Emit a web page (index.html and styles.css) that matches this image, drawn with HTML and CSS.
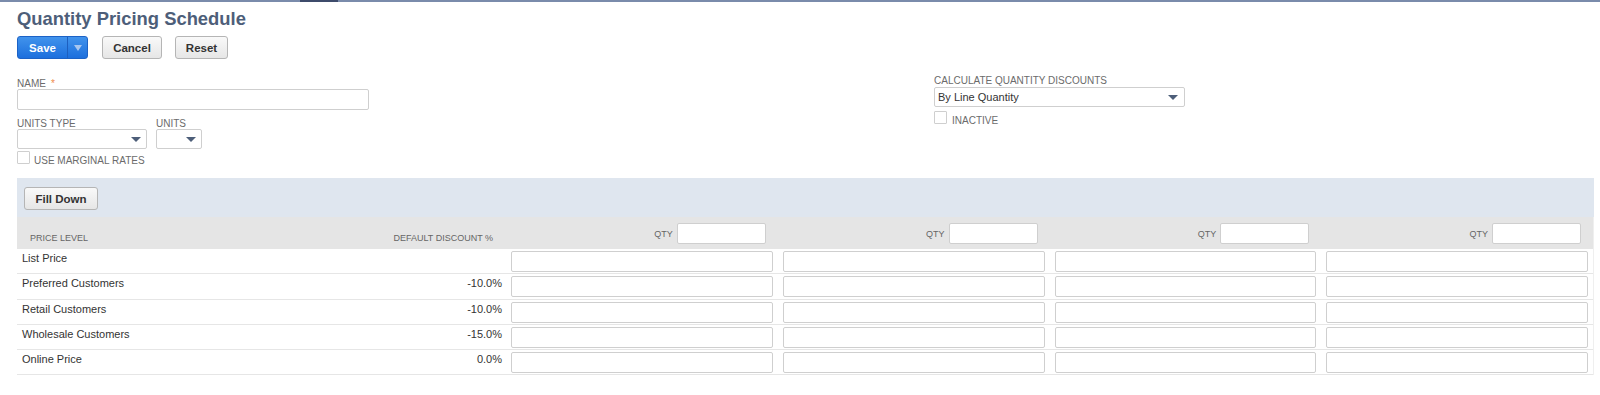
FILE: index.html
```html
<!DOCTYPE html>
<html>
<head>
<meta charset="utf-8">
<title>Quantity Pricing Schedule</title>
<link rel="stylesheet" href="styles.css">
</head>
<body>
<div class="topbar"><span class="topbar-mark"></span></div>
<div class="page">
  <h1 class="title">Quantity Pricing Schedule</h1>
  <div class="actions">
    <div class="split">
      <button class="split-main">Save</button>
      <button class="split-arrow"><span class="tri-light"></span></button>
    </div>
    <button class="btn btn-cancel">Cancel</button>
    <button class="btn btn-reset">Reset</button>
  </div>

  <div class="fields">
    <div class="col-left">
      <div class="lbl">NAME<span class="req">*</span></div>
      <div class="txt name-input"></div>
      <div class="units-row">
        <div class="field">
          <div class="lbl">UNITS TYPE</div>
          <div class="select sel-units-type"><span class="tri"></span></div>
        </div>
        <div class="field">
          <div class="lbl">UNITS</div>
          <div class="select sel-units"><span class="tri"></span></div>
        </div>
      </div>
      <div class="check check-left"><span class="box"></span><span class="check-lbl">USE MARGINAL RATES</span></div>
    </div>
    <div class="col-right">
      <div class="lbl lbl-right">CALCULATE QUANTITY DISCOUNTS</div>
      <div class="select sel-calc"><span class="sel-text">By Line Quantity</span><span class="tri"></span></div>
      <div class="check check-right"><span class="box"></span><span class="check-lbl">INACTIVE</span></div>
    </div>
  </div>

  <div class="band"><button class="btn btn-fill">Fill Down</button></div>

  <div class="table">
    <div class="row head">
      <div class="c-level h-text">PRICE LEVEL</div>
      <div class="c-disc h-text h-disc">DEFAULT DISCOUNT %</div>
      <div class="c-qty h-qty"><span class="qty-lbl">QTY</span><span class="txt qty-input"></span></div>
      <div class="c-qty h-qty"><span class="qty-lbl">QTY</span><span class="txt qty-input"></span></div>
      <div class="c-qty h-qty"><span class="qty-lbl">QTY</span><span class="txt qty-input"></span></div>
      <div class="c-qty h-qty"><span class="qty-lbl">QTY</span><span class="txt qty-input"></span></div>
    </div>
    <div class="row body">
      <div class="c-level">List Price</div>
      <div class="c-disc"></div>
      <div class="c-qty"><span class="txt cell-input"></span></div>
      <div class="c-qty"><span class="txt cell-input"></span></div>
      <div class="c-qty"><span class="txt cell-input"></span></div>
      <div class="c-qty"><span class="txt cell-input"></span></div>
    </div>
    <div class="row body">
      <div class="c-level">Preferred Customers</div>
      <div class="c-disc">-10.0%</div>
      <div class="c-qty"><span class="txt cell-input"></span></div>
      <div class="c-qty"><span class="txt cell-input"></span></div>
      <div class="c-qty"><span class="txt cell-input"></span></div>
      <div class="c-qty"><span class="txt cell-input"></span></div>
    </div>
    <div class="row body">
      <div class="c-level">Retail Customers</div>
      <div class="c-disc">-10.0%</div>
      <div class="c-qty"><span class="txt cell-input"></span></div>
      <div class="c-qty"><span class="txt cell-input"></span></div>
      <div class="c-qty"><span class="txt cell-input"></span></div>
      <div class="c-qty"><span class="txt cell-input"></span></div>
    </div>
    <div class="row body">
      <div class="c-level">Wholesale Customers</div>
      <div class="c-disc">-15.0%</div>
      <div class="c-qty"><span class="txt cell-input"></span></div>
      <div class="c-qty"><span class="txt cell-input"></span></div>
      <div class="c-qty"><span class="txt cell-input"></span></div>
      <div class="c-qty"><span class="txt cell-input"></span></div>
    </div>
    <div class="row body">
      <div class="c-level">Online Price</div>
      <div class="c-disc">0.0%</div>
      <div class="c-qty"><span class="txt cell-input"></span></div>
      <div class="c-qty"><span class="txt cell-input"></span></div>
      <div class="c-qty"><span class="txt cell-input"></span></div>
      <div class="c-qty"><span class="txt cell-input"></span></div>
    </div>
  </div>
</div>
</body>
</html>
```

FILE: styles.css
```css
* { box-sizing: border-box; }
html, body { margin: 0; padding: 0; background: #ffffff; }
body {
  font-family: "Liberation Sans", Arial, Helvetica, sans-serif;
  color: #333333;
  width: 1600px;
  height: 395px;
  overflow: hidden;
}
.topbar {
  height: 2px;
  background: #7a8bab;
  display: flex;
}
.topbar-mark {
  margin-left: 300px;
  width: 38px;
  height: 2px;
  background: #3e4b6b;
}
.page {
  padding: 0 6px 0 17px;
}
.title {
  margin: 6px 0 0 0;
  font-size: 18.4px;
  line-height: 22px;
  font-weight: bold;
  color: #4d5e79;
}
.actions {
  margin-top: 6px;
  display: flex;
  height: 23px;
}
button {
  font-family: "Liberation Sans", Arial, Helvetica, sans-serif;
  margin: 0;
  padding: 0;
  cursor: pointer;
}
.split {
  display: flex;
  width: 71px;
  height: 23px;
  border: 1px solid #1c62c6;
  border-radius: 3px;
  overflow: hidden;
  background: linear-gradient(#4193ec, #1c6fdd);
}
.split-main {
  width: 49px;
  height: 21px;
  border: 0;
  background: transparent;
  color: #ffffff;
  font-weight: bold;
  font-size: 11.5px;
}
.split-arrow {
  width: 20px;
  height: 21px;
  border: 0;
  border-left: 1px solid #1d5fbf;
  background: transparent;
  display: flex;
  align-items: center;
  justify-content: center;
}
.tri-light {
  width: 0; height: 0;
  border-left: 4px solid transparent;
  border-right: 4px solid transparent;
  border-top: 6px solid #a7c6ef;
}
.btn {
  height: 23px;
  border: 1px solid #b5b5b5;
  border-radius: 3px;
  background: linear-gradient(#f9f9f9, #e6e6e6);
  color: #333333;
  font-weight: bold;
  font-size: 11.5px;
}
.btn-cancel { width: 60px; margin-left: 14px; }
.btn-reset { width: 53px; margin-left: 13px; }
.btn-fill { width: 74px; }

.fields {
  margin-top: 16px;
  display: grid;
  grid-template-columns: 917px 1fr;
}
.col-left { padding-top: 3px; }
.lbl {
  font-size: 10px;
  line-height: 11px;
  color: #6b6b6b;
  white-space: nowrap;
}
.req { color: #ef8a4a; margin-left: 5px; }
.txt {
  display: block;
  background: #ffffff;
  border: 1px solid #cfcfcf;
  border-radius: 2px;
}
.name-input { width: 352px; height: 21px; }
.units-row {
  margin-top: 8px;
  display: flex;
  gap: 9px;
}
.select {
  position: relative;
  height: 20px;
  background: #ffffff;
  border: 1px solid #cfcfcf;
  border-radius: 2px;
  display: flex;
  align-items: center;
  justify-content: flex-end;
}
.sel-units-type { width: 130px; padding-right: 5px; }
.sel-units { width: 46px; padding-right: 5px; }
.tri {
  width: 0; height: 0;
  border-left: 5px solid transparent;
  border-right: 5px solid transparent;
  border-top: 5px solid #4d5e79;
}
.lbl-right { line-height: 11px; }
.sel-calc {
  margin-top: 1px;
  width: 251px;
  justify-content: space-between;
  padding: 0 6px 0 3px;
}
.sel-text {
  font-size: 11px;
  color: #333333;
}
.check {
  display: flex;
  align-items: flex-end;
}
.check-left { margin-top: 2px; }
.check-right { margin-top: 4px; }
.box {
  width: 13px;
  height: 13px;
  border: 1px solid #cfcfcf;
  border-radius: 1px;
  background: #ffffff;
}
.check-lbl {
  font-size: 10px;
  line-height: 9px;
  color: #6b6b6b;
  margin-left: 4px;
  margin-bottom: -1px;
}
.check-right .check-lbl { margin-left: 5px; }

.band {
  margin-top: 14px;
  background: #dfe6ef;
  padding: 9px 7px 7px 7px;
}

.table {
  border-right: 1px solid #efefef;
}
.row {
  display: grid;
  grid-template-columns: 309px 180px repeat(4, 1fr);
}
.head {
  background: #e5e5e5;
  height: 32px;
}
.h-text {
  font-size: 9px;
  line-height: 11px;
  color: #666666;
  align-self: end;
  padding-bottom: 5px;
  white-space: nowrap;
}
.head .c-level { padding-left: 13px; }
.h-disc { text-align: right; padding-right: 13px; }
.h-qty {
  display: flex;
  align-items: center;
  justify-content: flex-end;
  padding: 6px 12px 5px 0;
}
.qty-lbl {
  font-size: 9px;
  color: #666666;
  margin-right: 4px;
}
.qty-input { width: 89px; height: 21px; }
.body {
  height: 25.25px;
  border-bottom: 1px solid #e6e6e6;
}
.body .c-level {
  font-size: 11px;
  line-height: 13px;
  padding: 3px 0 0 5px;
  color: #333333;
}
.body .c-disc {
  font-size: 11px;
  line-height: 13px;
  padding: 3px 4px 0 0;
  text-align: right;
  color: #333333;
}
.body .c-qty {
  padding: 2px 5px 1px 5px;
}
.cell-input { width: 100%; height: 21px; }
```
